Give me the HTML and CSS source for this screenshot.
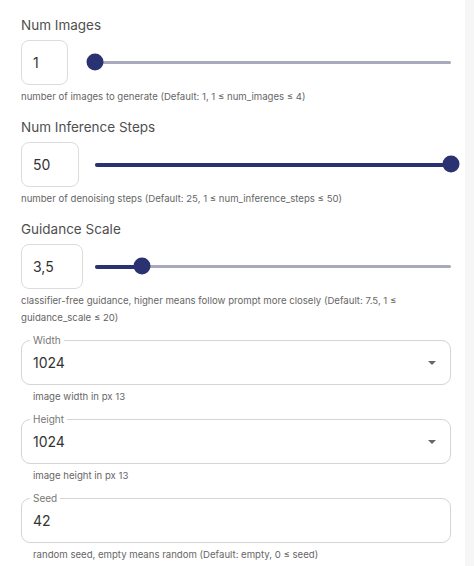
FILE: index.html
```html
<!DOCTYPE html>
<html>
<head>
  <meta charset="UTF-8" />
  <meta name="viewport" content="width=device-width, initial-scale=1.0" />
  <title>Inputs</title>
  <link rel="stylesheet" href="styles.css">
</head>
<body>
  <div class="panel">
    <div class="field">
      <div class="label">Num Images</div>
      <div class="row">
        <div class="numbox">1</div>
        <div class="slider">
          <div class="track">
            <div class="fill" style="width: 0%"></div>
            <div class="thumb" style="left: 0%"></div>
          </div>
        </div>
      </div>
      <div class="help">number of images to generate (Default: 1, 1 ≤ num_images ≤ 4)</div>
    </div>

    <div class="field">
      <div class="label">Num Inference Steps</div>
      <div class="row">
        <div class="numbox">50</div>
        <div class="slider">
          <div class="track">
            <div class="fill" style="width: 100%"></div>
            <div class="thumb" style="left: 100%"></div>
          </div>
        </div>
      </div>
      <div class="help">number of denoising steps (Default: 25, 1 ≤ num_inference_steps ≤ 50)</div>
    </div>

    <div class="field">
      <div class="label">Guidance Scale</div>
      <div class="row">
        <div class="numbox">3,5</div>
        <div class="slider">
          <div class="track">
            <div class="fill" style="width: 13.16%"></div>
            <div class="thumb" style="left: 13.16%"></div>
          </div>
        </div>
      </div>
      <div class="help">classifier-free guidance, higher means follow prompt more closely (Default: 7.5, 1 ≤ guidance_scale ≤ 20)</div>
    </div>

    <div class="outlined first">
      <fieldset>
        <legend>Width</legend>
        <div class="value">
          <span>1024</span>
          <span class="caret"></span>
        </div>
      </fieldset>
      <div class="help sub">image width in px 13</div>
    </div>

    <div class="outlined">
      <fieldset>
        <legend>Height</legend>
        <div class="value">
          <span>1024</span>
          <span class="caret"></span>
        </div>
      </fieldset>
      <div class="help sub">image height in px 13</div>
    </div>

    <div class="outlined">
      <fieldset>
        <legend>Seed</legend>
        <div class="value">
          <span>42</span>
        </div>
      </fieldset>
      <div class="help sub">random seed, empty means random (Default: empty, 0 ≤ seed)</div>
    </div>
  </div>
</body>
</html>
```

FILE: styles.css
```css
html, body {
  margin: 0;
  padding: 0;
}

body {
  font-family: Inter, "Noto Sans", sans-serif;
  background-color: #f6f6f6;
  color: #333;
}

.panel {
  width: 465px;
  height: 566px;
  background-color: #fff;
  box-sizing: border-box;
  padding: 3px 0 0 21px;
  overflow: hidden;
}

.field {
  margin-top: 12px;
}

.label {
  font-size: 13.5px;
  line-height: 20px;
  color: #4f4f4f;
}

.row {
  display: grid;
  grid-template-columns: 66px 372px;
  align-items: center;
  margin-top: 5px;
}

.numbox {
  justify-self: start;
  height: 45px;
  box-sizing: border-box;
  border: 1px solid #dcdcdc;
  border-radius: 8px;
  padding: 0 28px 0 11px;
  font-size: 14px;
  line-height: 43px;
  color: #333;
}

.slider {
  padding: 0 8px;
}

.track {
  position: relative;
  height: 3px;
  border-radius: 2px;
  background-color: #a8aabb;
}

.fill {
  height: 4px;
  margin-top: -0.5px;
  border-radius: 2px;
  background-color: #2b3272;
}

.thumb {
  position: absolute;
  top: 50%;
  width: 17px;
  height: 17px;
  border-radius: 50%;
  background-color: #2b3272;
  transform: translate(-50%, -50%);
}

.help {
  margin-top: 3px;
  font-size: 9.6px;
  line-height: 17px;
  color: #666;
}

.help.sub {
  padding-left: 12px;
  line-height: 18px;
}

.outlined {
  margin-top: 7px;
}

.outlined.first {
  margin-top: 8px;
}

fieldset {
  width: 430px;
  box-sizing: border-box;
  margin: 0;
  padding: 0 8px 11px 8px;
  border: 1px solid #d4d4d4;
  border-radius: 9px;
}

legend {
  padding: 0 3px;
  font-size: 10px;
  line-height: 12px;
  color: #777;
}

.value {
  display: flex;
  align-items: center;
  justify-content: space-between;
  padding: 7px 6px 0 3px;
  font-size: 14px;
  line-height: 20px;
  color: #333;
}

.caret {
  width: 0;
  height: 0;
  border-left: 4px solid transparent;
  border-right: 4px solid transparent;
  border-top: 4px solid #666;
}
```
